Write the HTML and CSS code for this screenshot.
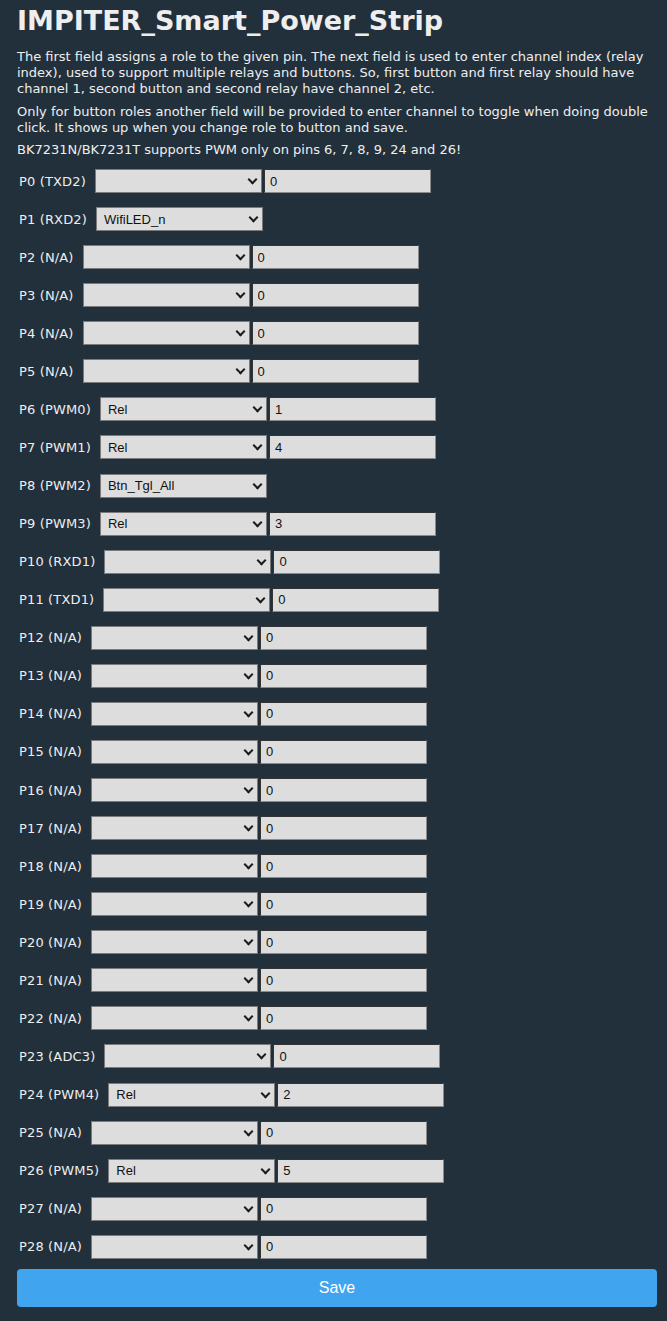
FILE: index.html
```html
<!DOCTYPE html>
<html lang="en">
<head>
    <meta charset="UTF-8">
    <meta name="viewport" content="width=device-width, initial-scale=1.0">
    <title>IMPITER_Smart_Power_Strip</title>
    <link rel="stylesheet" href="styles.css">
</head>
<body>
    <div class="page">
        <h1>IMPITER_Smart_Power_Strip</h1>
        <p>The first field assigns a role to the given pin. The next field is used to enter channel index (relay index), used to support multiple relays and buttons. So, first button and first relay should have channel 1, second button and second relay have channel 2, etc.</p>
        <p>Only for button roles another field will be provided to enter channel to toggle when doing double click. It shows up when you change role to button and save.</p>
        <p>BK7231N/BK7231T supports PWM only on pins 6, 7, 8, 9, 24 and 26!</p>
        <form class="pins">
            <div class="pin"><label>P0 (TXD2)</label><span class="pick"><select><option></option></select></span><input type="text" value="0"></div>
            <div class="pin"><label>P1 (RXD2)</label><span class="pick"><select><option>WifiLED_n</option></select></span></div>
            <div class="pin"><label>P2 (N/A)</label><span class="pick"><select><option></option></select></span><input type="text" value="0"></div>
            <div class="pin"><label>P3 (N/A)</label><span class="pick"><select><option></option></select></span><input type="text" value="0"></div>
            <div class="pin"><label>P4 (N/A)</label><span class="pick"><select><option></option></select></span><input type="text" value="0"></div>
            <div class="pin"><label>P5 (N/A)</label><span class="pick"><select><option></option></select></span><input type="text" value="0"></div>
            <div class="pin"><label>P6 (PWM0)</label><span class="pick"><select><option>Rel</option></select></span><input type="text" value="1"></div>
            <div class="pin"><label>P7 (PWM1)</label><span class="pick"><select><option>Rel</option></select></span><input type="text" value="4"></div>
            <div class="pin"><label>P8 (PWM2)</label><span class="pick"><select><option>Btn_Tgl_All</option></select></span></div>
            <div class="pin"><label>P9 (PWM3)</label><span class="pick"><select><option>Rel</option></select></span><input type="text" value="3"></div>
            <div class="pin"><label>P10 (RXD1)</label><span class="pick"><select><option></option></select></span><input type="text" value="0"></div>
            <div class="pin"><label>P11 (TXD1)</label><span class="pick"><select><option></option></select></span><input type="text" value="0"></div>
            <div class="pin"><label>P12 (N/A)</label><span class="pick"><select><option></option></select></span><input type="text" value="0"></div>
            <div class="pin"><label>P13 (N/A)</label><span class="pick"><select><option></option></select></span><input type="text" value="0"></div>
            <div class="pin"><label>P14 (N/A)</label><span class="pick"><select><option></option></select></span><input type="text" value="0"></div>
            <div class="pin"><label>P15 (N/A)</label><span class="pick"><select><option></option></select></span><input type="text" value="0"></div>
            <div class="pin"><label>P16 (N/A)</label><span class="pick"><select><option></option></select></span><input type="text" value="0"></div>
            <div class="pin"><label>P17 (N/A)</label><span class="pick"><select><option></option></select></span><input type="text" value="0"></div>
            <div class="pin"><label>P18 (N/A)</label><span class="pick"><select><option></option></select></span><input type="text" value="0"></div>
            <div class="pin"><label>P19 (N/A)</label><span class="pick"><select><option></option></select></span><input type="text" value="0"></div>
            <div class="pin"><label>P20 (N/A)</label><span class="pick"><select><option></option></select></span><input type="text" value="0"></div>
            <div class="pin"><label>P21 (N/A)</label><span class="pick"><select><option></option></select></span><input type="text" value="0"></div>
            <div class="pin"><label>P22 (N/A)</label><span class="pick"><select><option></option></select></span><input type="text" value="0"></div>
            <div class="pin"><label>P23 (ADC3)</label><span class="pick"><select><option></option></select></span><input type="text" value="0"></div>
            <div class="pin"><label>P24 (PWM4)</label><span class="pick"><select><option>Rel</option></select></span><input type="text" value="2"></div>
            <div class="pin"><label>P25 (N/A)</label><span class="pick"><select><option></option></select></span><input type="text" value="0"></div>
            <div class="pin"><label>P26 (PWM5)</label><span class="pick"><select><option>Rel</option></select></span><input type="text" value="5"></div>
            <div class="pin"><label>P27 (N/A)</label><span class="pick"><select><option></option></select></span><input type="text" value="0"></div>
            <div class="pin"><label>P28 (N/A)</label><span class="pick"><select><option></option></select></span><input type="text" value="0"></div>
            <button type="button" class="save">Save</button>
        </form>
    </div>
</body>
</html>
```

FILE: styles.css
```css
body {
    margin: 0;
    background: #22303c;
    color: #eeeeee;
    font-family: "DejaVu Sans", Verdana, sans-serif;
    font-size: 13px;
}
.page {
    padding: 5px 10px 13px 17px;
}
h1 {
    margin: 0 0 13px;
    font-size: 27px;
    font-weight: bold;
    color: #eeeeee;
}
p {
    margin: 0 0 6.5px;
    line-height: 16px;
}
.pins {
    display: flex;
    flex-direction: column;
    gap: 14.07px;
    margin-top: 11px;
}
.pin {
    display: flex;
    align-items: center;
    height: 24px;
}
.pin label {
    padding-left: 2px;
    margin-right: 9px;
    white-space: nowrap;
    letter-spacing: 0.15px;
}
.pick {
    position: relative;
    display: block;
}
.pick::after {
    content: "";
    position: absolute;
    right: 6px;
    top: 7px;
    width: 5px;
    height: 5px;
    border-right: 2px solid #1c1c1c;
    border-bottom: 2px solid #1c1c1c;
    transform: rotate(45deg);
    pointer-events: none;
}
select, input {
    box-sizing: border-box;
    width: 167px;
    height: 24px;
    margin: 0;
    background: #dddddd;
    color: #111111;
    font-family: "Liberation Sans", Arial, sans-serif;
    font-size: 13px;
    border-radius: 0;
    outline: none;
}
select {
    display: block;
    appearance: none;
    -webkit-appearance: none;
    padding: 0 20px 0 7px;
    border: 1px solid #7a7a7a;
}
input {
    margin-left: 2px;
    padding: 0 5px;
    border: 1px solid;
    border-color: #333333 #8a8a8a #8a8a8a #333333;
}
.save {
    margin-top: -3.5px;
    height: 38px;
    border: none;
    border-radius: 4px;
    background: #41a4ee;
    color: #ffffff;
    font-family: "Liberation Sans", Arial, sans-serif;
    font-size: 16px;
    cursor: pointer;
}
```
